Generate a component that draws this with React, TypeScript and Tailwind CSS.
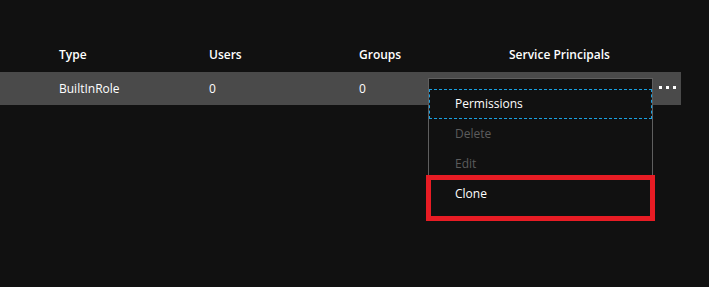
import React from 'react';

const columns = ['Type', 'Users', 'Groups', 'Service Principals'];
const row = ['BuiltInRole', '0', '0', ''];

const menuItems = [
    { label: 'Permissions', enabled: true, focused: true },
    { label: 'Delete', enabled: false },
    { label: 'Edit', enabled: false },
    { label: 'Clone', enabled: true },
];

const font = { fontFamily: '"Open Sans", "Noto Sans", sans-serif' };

export default function App() {
    return (
        <div className="relative w-[709px] h-[287px] bg-[#111111] text-white text-[12px] overflow-hidden" style={font}>
            {/* header */}
            <div className="flex h-[34px] mt-[38px] items-center pl-[59px] font-semibold">
                {columns.map(c => (
                    <div key={c} className="w-[150px] shrink-0">{c}</div>
                ))}
            </div>

            {/* data row */}
            <div className="flex h-[33px] w-[681px] items-center pl-[59px] bg-[#4a4a4a]">
                {row.map((v, i) => (
                    <div key={i} className="w-[150px] shrink-0">{v}</div>
                ))}
                <div className="ml-auto mr-[10px] mb-[2px] flex gap-[4px]">
                    <span className="w-[3px] h-[3px] bg-white" />
                    <span className="w-[3px] h-[3px] bg-white" />
                    <span className="w-[3px] h-[3px] bg-white" />
                </div>
            </div>

            {/* context menu */}
            <div className="absolute left-[428px] top-[78px] w-[225px] h-[140px] border border-[#5f5f5f] bg-[#111111] pt-[10px]">
                {menuItems.map(item => (
                    <div
                        key={item.label}
                        className={`h-[30px] flex items-center pl-[25px] ${item.focused ? 'border border-dashed border-[#1ba1e2]' : 'border border-transparent'} ${item.enabled ? 'text-white' : 'text-[#5c5c5c]'}`}
                    >
                        {item.label}
                    </div>
                ))}
            </div>

            {/* highlight annotation */}
            <div className="absolute left-[426px] top-[175px] w-[229px] h-[46px] border-[5px] border-[#e81c24]" />
        </div>
    );
}
